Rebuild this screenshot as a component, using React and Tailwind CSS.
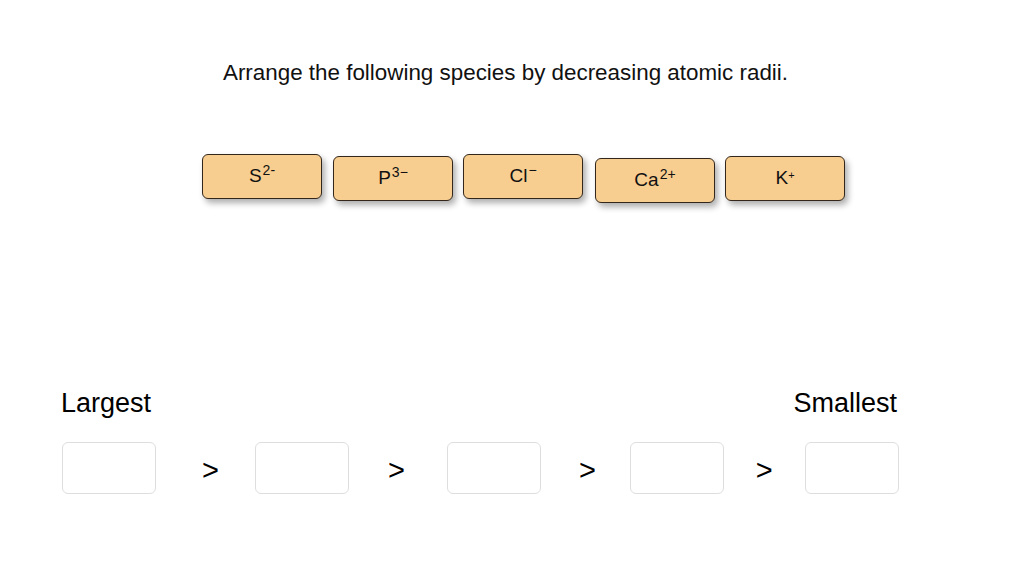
import React from "react";

function Tile({ base, sup, supClass, className }) {
  return (
    <div
      className={
        "w-[120px] h-[45px] flex items-center justify-center bg-[#f8cd90] border border-[#33271c] rounded-[6px] shadow-[3px_4px_6px_rgba(0,0,0,0.32)] text-[19px] text-[#111] " +
        className
      }
    >
      <span>
        {base}
        <sup className={supClass}>{sup}</sup>
      </span>
    </div>
  );
}

function Box({ className }) {
  return (
    <div
      className={
        "w-[94px] h-[52px] border border-[#dedede] rounded-[6px] bg-white " +
        className
      }
    />
  );
}

function Gt({ className }) {
  return (
    <span className={"text-[29px] leading-[30px] pt-[4px] text-black " + className}>
      &gt;
    </span>
  );
}

export default function App() {
  return (
    <div className="w-[1024px] h-[572px] bg-white font-['Liberation_Sans',Arial,sans-serif] text-black overflow-hidden">
      <div className="pt-[60px] flex justify-center pr-[13px]">
        <p className="text-[22.4px] leading-[26px] text-[#111]">
          Arrange the following species by decreasing atomic radii.
        </p>
      </div>

      <div className="mt-[68px] flex items-start pl-[202px] h-[49px]">
        <Tile base="S" sup="2-" supClass="text-[14px] ml-[1px]" className="mt-0" />
        <Tile base="P" sup="3−" supClass="text-[14px] ml-[1px]" className="ml-[11px] mt-[2px]" />
        <Tile base="Cl" sup="−" supClass="text-[14px] ml-[1px]" className="ml-[10px] mt-0" />
        <Tile base="Ca" sup="2+" supClass="text-[14px] ml-[1px]" className="ml-[12px] mt-[4px]" />
        <Tile base="K" sup="+" supClass="text-[11px]" className="ml-[10px] mt-[2px]" />
      </div>

      <div className="mt-[185px] flex justify-between pl-[61px] w-[897px] text-[27px] leading-[30px]">
        <span>Largest</span>
        <span>Smallest</span>
      </div>

      <div className="mt-[24px] flex items-center">
        <Box className="ml-[62px]" />
        <Gt className="ml-[46px]" />
        <Box className="ml-[36px]" />
        <Gt className="ml-[39px]" />
        <Box className="ml-[42px]" />
        <Gt className="ml-[38px]" />
        <Box className="ml-[34px]" />
        <Gt className="ml-[32px]" />
        <Box className="ml-[32px]" />
      </div>
    </div>
  );
}
